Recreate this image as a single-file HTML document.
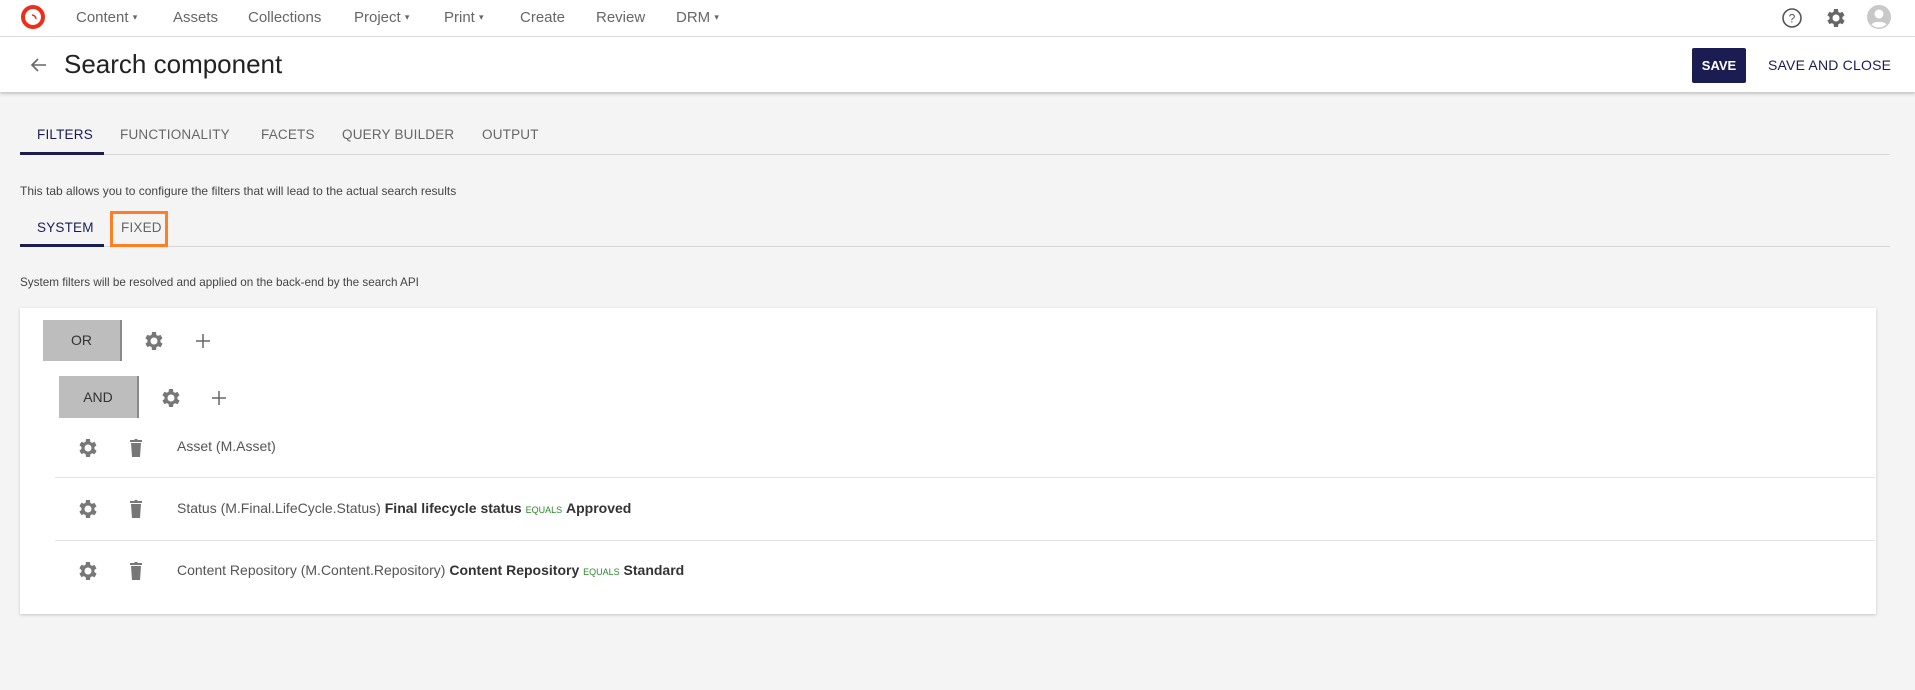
<!DOCTYPE html>
<html><head><meta charset="utf-8"><style>
*{box-sizing:border-box;margin:0;padding:0}
body{width:1915px;height:690px;background:#f4f4f4;font-family:"Liberation Sans",sans-serif;position:relative;overflow:hidden;color:#333}
.abs{position:absolute;white-space:nowrap}
.nav{position:absolute;left:0;top:0;width:1915px;height:37px;background:#fff;border-bottom:1px solid #ddd}
.nav .i{position:absolute;top:9px;font-size:15px;color:#666}
.car{font-size:9px;vertical-align:2px}
.hdr{position:absolute;left:0;top:37px;width:1915px;height:55px;background:#fff;box-shadow:0 2px 3px rgba(0,0,0,.2)}
.tab{position:absolute;font-size:13.5px;color:#666;letter-spacing:.2px}
.line{position:absolute;height:1px;background:#d6d6d6}
.ul{position:absolute;height:3px;background:#1b1d52}
.card{position:absolute;left:20px;top:308px;width:1856px;height:306px;background:#fff;box-shadow:0 1px 3px rgba(0,0,0,.2)}
.btn{position:absolute;background:#bdbdbd;border-right:2px solid #8a8a8a;font-size:14px;color:#333;text-align:center}
.row{position:absolute;left:177px;font-size:14px;color:#555}
.row b{color:#333;font-weight:600}
.eq{color:#2a8a2a;font-size:9px}
.div{position:absolute;left:55px;width:1820px;height:1px;background:#e4e4e4}
</style></head><body>
<div class="nav">
<svg class="abs" style="left:20px;top:4px" width="26" height="26" viewBox="0 0 26 26"><circle cx="13" cy="13" r="10" fill="none" stroke="#ee2d1a" stroke-width="4"/><path d="M9 8 A7 7 0 0 1 18 14" fill="none" stroke="#fff" stroke-width="1.5"/><path d="M12 11 A4 4 0 0 1 16 15" fill="none" stroke="#ee2d1a" stroke-width="1.5"/></svg>
<span class="i" style="left:76px">Content <span class="car">▾</span></span>
<span class="i" style="left:173px">Assets</span>
<span class="i" style="left:248px">Collections</span>
<span class="i" style="left:354px">Project <span class="car">▾</span></span>
<span class="i" style="left:444px">Print <span class="car">▾</span></span>
<span class="i" style="left:520px">Create</span>
<span class="i" style="left:596px">Review</span>
<span class="i" style="left:676px">DRM <span class="car">▾</span></span>
<svg class="abs" style="left:1781px;top:7px" width="22" height="22" viewBox="0 0 22 22"><circle cx="11" cy="11" r="9" fill="none" stroke="#555" stroke-width="1.6"/><text x="11" y="15.5" text-anchor="middle" font-size="12" font-family="Liberation Sans" fill="#555">?</text></svg>
<svg class="abs" style="left:1824px;top:6px" width="24" height="24" viewBox="0 0 24 24"><path fill="#666" d="M19.4 13a7.5 7.5 0 0 0 0-2l2.1-1.6-2-3.5-2.5 1a7 7 0 0 0-1.7-1L15 3h-4l-.4 2.7a7 7 0 0 0-1.7 1l-2.5-1-2 3.5L6.5 11a7.5 7.5 0 0 0 0 2l-2.1 1.6 2 3.5 2.5-1a7 7 0 0 0 1.7 1L11 21h4l.4-2.7a7 7 0 0 0 1.7-1l2.5 1 2-3.5zM13 15.5a3.5 3.5 0 1 1 0-7 3.5 3.5 0 0 1 0 7z" transform="translate(-1 0)"/></svg>
<svg class="abs" style="left:1866px;top:4px" width="26" height="26" viewBox="0 0 26 26"><circle cx="13" cy="13" r="12" fill="#c8c8c8"/><circle cx="13" cy="10" r="4.5" fill="#fff"/><path d="M5.5 20.5c2-3.5 13-3.5 15 0A11 11 0 0 1 5.5 20.5z" fill="#fff"/></svg>
</div>
<div class="hdr">
<svg class="abs" style="left:30px;top:20px" width="18" height="16" viewBox="0 0 18 16"><path d="M16 8H3M8 2 2 8l6 6" fill="none" stroke="#666" stroke-width="1.6"/></svg>
<span class="abs" style="left:64px;top:12px;font-size:26px;color:#222">Search component</span>
<div class="abs" style="left:1692px;top:11px;width:54px;height:35px;background:#1b1d52;border-radius:2px;color:#fff;font-size:13px;font-weight:bold;text-align:center;line-height:35px">SAVE</div>
<span class="abs" style="left:1768px;top:20px;font-size:14px;color:#1b1d52;letter-spacing:.2px">SAVE AND CLOSE</span>
</div>
<span class="tab" style="left:37px;top:127px;color:#1b1d52">FILTERS</span>
<span class="tab" style="left:120px;top:127px">FUNCTIONALITY</span>
<span class="tab" style="left:261px;top:127px">FACETS</span>
<span class="tab" style="left:342px;top:127px">QUERY BUILDER</span>
<span class="tab" style="left:482px;top:127px">OUTPUT</span>
<div class="line" style="left:20px;top:154px;width:1870px"></div>
<div class="ul" style="left:20px;top:152px;width:84px"></div>
<span class="abs" style="left:20px;top:184px;font-size:12px;color:#444">This tab allows you to configure the filters that will lead to the actual search results</span>
<span class="tab" style="left:37px;top:220px;color:#1b1d52">SYSTEM</span>
<span class="tab" style="left:121px;top:220px">FIXED</span>
<div class="line" style="left:20px;top:246px;width:1870px"></div>
<div class="ul" style="left:20px;top:244px;width:84px"></div>
<div class="abs" style="left:110px;top:211px;width:58px;height:36px;border:3px solid #ff7f27"></div>
<span class="abs" style="left:20px;top:276px;font-size:11.7px;color:#444">System filters will be resolved and applied on the back-end by the search API</span>
<div class="card">
<div class="btn" style="left:23px;top:12px;width:79px;height:41px;line-height:41px">OR</div>
<div class="btn" style="left:39px;top:68px;width:80px;height:42px;line-height:42px">AND</div>
<div class="div" style="left:35px;top:169px;width:1820px"></div>
<div class="div" style="left:35px;top:232px;width:1820px"></div>
<div class="row" style="left:157px;top:130px">Asset (M.Asset)</div>
<div class="row" style="left:157px;top:192px">Status (M.Final.LifeCycle.Status) <b>Final lifecycle status</b> <span class="eq">EQUALS</span> <b>Approved</b></div>
<div class="row" style="left:157px;top:254px">Content Repository (M.Content.Repository) <b>Content Repository</b> <span class="eq">EQUALS</span> <b>Standard</b></div>
</div>
<svg width="0" height="0" style="position:absolute"><defs>
<path id="g" fill="#777" d="M19.4 13a7.5 7.5 0 0 0 0-2l2.1-1.6-2-3.5-2.5 1a7 7 0 0 0-1.7-1L15 3h-4l-.4 2.7a7 7 0 0 0-1.7 1l-2.5-1-2 3.5L6.5 11a7.5 7.5 0 0 0 0 2l-2.1 1.6 2 3.5 2.5-1a7 7 0 0 0 1.7 1L11 21h4l.4-2.7a7 7 0 0 0 1.7-1l2.5 1 2-3.5zM13 15.5a3.5 3.5 0 1 1 0-7 3.5 3.5 0 0 1 0 7z"/>
<path id="t" fill="#777" d="M7 7h10l-1 14H8zM6 4h4l1-1h2l1 1h4v2H6z"/>
<path id="p" d="M12 5v14M5 12h14" stroke="#666" stroke-width="1.5" fill="none"/>
</defs></svg>
<svg class="abs" style="left:142px;top:329px" width="24" height="24" viewBox="1 0 24 24"><use href="#g"/></svg>
<svg class="abs" style="left:191px;top:329px" width="24" height="24" viewBox="0 0 24 24"><use href="#p"/></svg>
<svg class="abs" style="left:159px;top:386px" width="24" height="24" viewBox="1 0 24 24"><use href="#g"/></svg>
<svg class="abs" style="left:207px;top:386px" width="24" height="24" viewBox="0 0 24 24"><use href="#p"/></svg>
<svg class="abs" style="left:76px;top:436px" width="24" height="24" viewBox="1 0 24 24"><use href="#g"/></svg>
<svg class="abs" style="left:124px;top:436px" width="24" height="24" viewBox="0 0 24 24"><use href="#t"/></svg>
<svg class="abs" style="left:76px;top:497px" width="24" height="24" viewBox="1 0 24 24"><use href="#g"/></svg>
<svg class="abs" style="left:124px;top:497px" width="24" height="24" viewBox="0 0 24 24"><use href="#t"/></svg>
<svg class="abs" style="left:76px;top:559px" width="24" height="24" viewBox="1 0 24 24"><use href="#g"/></svg>
<svg class="abs" style="left:124px;top:559px" width="24" height="24" viewBox="0 0 24 24"><use href="#t"/></svg>
</body></html>
